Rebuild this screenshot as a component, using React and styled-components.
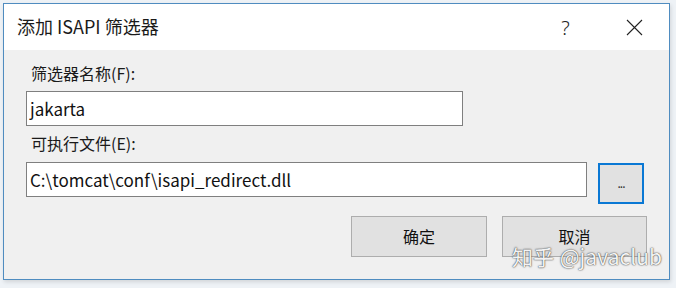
import React from "react";
import styled, { createGlobalStyle } from "styled-components";

const GlobalStyle = createGlobalStyle`
  html, body {
    margin: 0;
    padding: 0;
    background: #eef2f6;
    width: 676px;
    height: 288px;
    overflow: hidden;
  }
  body {
    font-family: "Noto Sans CJK SC", "Noto Sans", sans-serif;
  }
`;

const Screen = styled.div`
  position: relative;
  width: 676px;
  height: 288px;
  padding: 3px 0 0 3px;
  box-sizing: border-box;
`;

const Window = styled.div`
  width: 667px;
  height: 277px;
  box-sizing: border-box;
  border: 1px solid #4f8cc0;
  background: #f0f0f0;
  display: flex;
  flex-direction: column;
  box-shadow: 1px 2px 4px rgba(0, 0, 0, 0.12);
`;

const TitleBar = styled.div`
  height: 46px;
  background: #ffffff;
  display: flex;
  align-items: center;
  padding-left: 13px;
  flex-shrink: 0;
`;

const Title = styled.div`
  flex: 1;
  font-size: 18px;
  color: #1a1a1a;
  padding-bottom: 2px;
`;

const TitleButton = styled.div`
  width: 69px;
  height: 46px;
  display: flex;
  align-items: center;
  justify-content: center;
  color: #222;
  font-size: 20px;
  font-family: "Noto Sans", sans-serif;
  font-weight: 300;
`;

const Body = styled.div`
  flex: 1;
  display: flex;
  flex-direction: column;
  padding: 11px 22px 0 22px;
`;

const Label = styled.div`
  font-size: 16px;
  line-height: 24px;
  color: #1a1a1a;
  padding-left: 5px;
  margin-bottom: ${(p) => p.$gap}px;
`;

const FieldRow = styled.div`
  display: flex;
  align-items: flex-start;
  gap: 11px;
`;

const TextBox = styled.div`
  width: ${(p) => p.$width}px;
  height: ${(p) => p.$height}px;
  box-sizing: border-box;
  border: 1px solid #7f7f7f;
  background: #ffffff;
  display: flex;
  align-items: center;
  padding-left: 3px;
  font-size: 17px;
  color: #111;
  margin-bottom: ${(p) => p.$gap}px;
`;

const BrowseButton = styled.div`
  width: 46px;
  height: 41px;
  box-sizing: border-box;
  border: 2px solid #0a78d4;
  background: #e1e1e1;
  margin-top: 1px;
  display: flex;
  align-items: center;
  justify-content: center;
  font-size: 12px;
  color: #333;
  letter-spacing: -1px;
  padding-bottom: 2px;
`;

const ButtonRow = styled.div`
  display: flex;
  justify-content: flex-end;
  gap: 15px;
  margin-top: 12px;
`;

const DialogButton = styled.div`
  width: ${(p) => p.$width}px;
  height: 41px;
  box-sizing: border-box;
  border: 1px solid #adadad;
  background: #e1e1e1;
  display: flex;
  align-items: center;
  justify-content: center;
  font-size: 16px;
  color: #111;
  padding-bottom: 2px;
`;

const Watermark = styled.div`
  position: absolute;
  left: 512px;
  top: 241px;
  font-size: 21px;
  color: rgba(255, 255, 255, 0.94);
  text-shadow: 0 0 1px rgba(50, 50, 50, 0.95), 0 0 2px rgba(50, 50, 50, 0.7);
  white-space: nowrap;
  word-spacing: 1px;
`;

function CloseIcon() {
  return (
    <svg width="17" height="17" viewBox="0 0 17 17">
      <path d="M1 1 L16 16 M16 1 L1 16" stroke="#222" strokeWidth="1.1" fill="none" />
    </svg>
  );
}

export default function App() {
  return (
    <>
      <GlobalStyle />
      <Screen>
        <Window>
          <TitleBar>
            <Title>添加 ISAPI 筛选器</Title>
            <TitleButton>?</TitleButton>
            <TitleButton>
              <CloseIcon />
            </TitleButton>
          </TitleBar>
          <Body>
            <Label $gap={6}>筛选器名称(F):</Label>
            <TextBox $width={437} $height={35} $gap={5}>jakarta</TextBox>
            <Label $gap={7}>可执行文件(E):</Label>
            <FieldRow>
              <TextBox $width={561} $height={35} $gap={0}>
                C:\tomcat\conf\isapi_redirect.dll
              </TextBox>
              <BrowseButton>...</BrowseButton>
            </FieldRow>
            <ButtonRow>
              <DialogButton $width={136}>确定</DialogButton>
              <DialogButton $width={145}>取消</DialogButton>
            </ButtonRow>
          </Body>
        </Window>
        <Watermark>知乎 @javaclub</Watermark>
      </Screen>
    </>
  );
}
